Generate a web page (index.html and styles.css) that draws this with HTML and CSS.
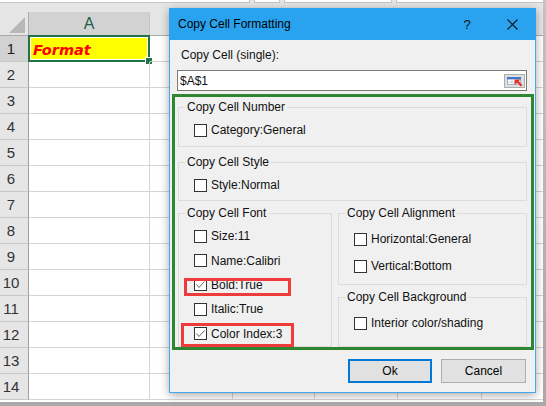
FILE: index.html
```html
<!DOCTYPE html>
<html>
<head>
<meta charset="utf-8">
<link rel="stylesheet" href="styles.css">
</head>
<body>
<div class="screen">
  <div class="sheet">
    <div class="topbar"><span class="tb tb1"></span><span class="tb tb2"></span><span class="tb tb3"></span><span class="tb tb4"></span></div>
    <div class="colhead">
      <div class="corner"><svg width="28" height="23" viewBox="0 0 28 23"><polygon points="25,5 25,21 9,21" fill="#b7b7b7"/></svg></div>
      <div class="ch ca on">A</div><div class="ch cb"></div><div class="ch cc"></div><div class="ch cd"></div><div class="ch ce"></div><div class="ch cf"></div>
    </div>
    <div class="row"><div class="rh on">1</div><div class="c ca yellow"><span class="fmt">Format</span><span class="selbox"><span class="handle"></span></span></div><div class="c cb"></div><div class="c cc"></div><div class="c cd"></div><div class="c ce"></div><div class="c cf"></div></div>
    <div class="row"><div class="rh">2</div><div class="c ca"></div><div class="c cb"></div><div class="c cc"></div><div class="c cd"></div><div class="c ce"></div><div class="c cf"></div></div>
    <div class="row"><div class="rh">3</div><div class="c ca"></div><div class="c cb"></div><div class="c cc"></div><div class="c cd"></div><div class="c ce"></div><div class="c cf"></div></div>
    <div class="row"><div class="rh">4</div><div class="c ca"></div><div class="c cb"></div><div class="c cc"></div><div class="c cd"></div><div class="c ce"></div><div class="c cf"></div></div>
    <div class="row"><div class="rh">5</div><div class="c ca"></div><div class="c cb"></div><div class="c cc"></div><div class="c cd"></div><div class="c ce"></div><div class="c cf"></div></div>
    <div class="row"><div class="rh">6</div><div class="c ca"></div><div class="c cb"></div><div class="c cc"></div><div class="c cd"></div><div class="c ce"></div><div class="c cf"></div></div>
    <div class="row"><div class="rh">7</div><div class="c ca"></div><div class="c cb"></div><div class="c cc"></div><div class="c cd"></div><div class="c ce"></div><div class="c cf"></div></div>
    <div class="row"><div class="rh">8</div><div class="c ca"></div><div class="c cb"></div><div class="c cc"></div><div class="c cd"></div><div class="c ce"></div><div class="c cf"></div></div>
    <div class="row"><div class="rh">9</div><div class="c ca"></div><div class="c cb"></div><div class="c cc"></div><div class="c cd"></div><div class="c ce"></div><div class="c cf"></div></div>
    <div class="row"><div class="rh">10</div><div class="c ca"></div><div class="c cb"></div><div class="c cc"></div><div class="c cd"></div><div class="c ce"></div><div class="c cf"></div></div>
    <div class="row"><div class="rh">11</div><div class="c ca"></div><div class="c cb"></div><div class="c cc"></div><div class="c cd"></div><div class="c ce"></div><div class="c cf"></div></div>
    <div class="row"><div class="rh">12</div><div class="c ca"></div><div class="c cb"></div><div class="c cc"></div><div class="c cd"></div><div class="c ce"></div><div class="c cf"></div></div>
    <div class="row"><div class="rh">13</div><div class="c ca"></div><div class="c cb"></div><div class="c cc"></div><div class="c cd"></div><div class="c ce"></div><div class="c cf"></div></div>
    <div class="row"><div class="rh">14</div><div class="c ca"></div><div class="c cb"></div><div class="c cc"></div><div class="c cd"></div><div class="c ce"></div><div class="c cf"></div></div>
  </div>

  <div class="dialog">
    <div class="titlebar">
      <span class="title">Copy Cell Formatting</span>
      <span class="tbtn help">?</span>
      <span class="tbtn close"><svg width="11" height="11" viewBox="0 0 11 11"><path d="M0.5 0.5L10.5 10.5M10.5 0.5L0.5 10.5" stroke="#111" stroke-width="1.1" fill="none"/></svg></span>
    </div>
    <div class="lbl">Copy Cell (single):</div>
    <div class="range">
      <span class="rtext">$A$1</span>
      <span class="rbtn"><svg width="21" height="14" viewBox="0 0 21 14">
        <rect x="0.5" y="0.5" width="20" height="13" fill="#dedede" stroke="#adadad"/>
        <rect x="3.5" y="3.5" width="13" height="7" fill="#fff" stroke="#9aa9bd" stroke-width="0.8"/>
        <rect x="3" y="3" width="14" height="2.4" fill="#3d77c9"/>
        <path d="M3.5 8H16.5M8 5.4V10.5M12.5 5.4V10.5" stroke="#b6c5dc" stroke-width="0.8"/>
        <polygon points="10.5,5.5 16.5,5.5 14.7,7.3 18.5,11 16.8,12.6 13,8.8 10.5,11" fill="#e2312b"/>
      </svg></span>
    </div>
    <div class="green">
      <fieldset class="grp g-num">
        <legend>Copy Cell Number</legend>
        <div class="items pt4 pb3">
          <div class="opt h245"><span class="box"></span>Category:General</div>
        </div>
      </fieldset>
      <fieldset class="grp g-style">
        <legend>Copy Cell Style</legend>
        <div class="items pt4 pb25">
          <div class="opt h245"><span class="box"></span>Style:Normal</div>
        </div>
      </fieldset>
      <div class="cols">
        <fieldset class="grp g-font">
          <legend>Copy Cell Font</legend>
          <div class="items pt4">
            <div class="opt h244"><span class="box"></span>Size:11</div>
            <div class="opt h244"><span class="box"></span>Name:Calibri</div>
            <div class="opt h244"><span class="box"><svg width="11" height="11" viewBox="0 0 11 11"><polyline points="1.5,5.5 4,8.5 9.5,2.5" fill="none" stroke="#666" stroke-width="1"/></svg></span>Bold:True<span class="mark mark-bold"></span></div>
            <div class="opt h244"><span class="box"></span>Italic:True</div>
            <div class="opt h244"><span class="box"><svg width="11" height="11" viewBox="0 0 11 11"><polyline points="1.5,5.5 4,8.5 9.5,2.5" fill="none" stroke="#666" stroke-width="1"/></svg></span>Color Index:3<span class="mark mark-color"></span></div>
          </div>
        </fieldset>
        <div class="rcol">
          <fieldset class="grp g-align">
            <legend>Copy Cell Alignment</legend>
            <div class="items pt55 pb45">
              <div class="opt h27"><span class="box"></span>Horizontal:General</div>
              <div class="opt h27"><span class="box"></span>Vertical:Bottom</div>
            </div>
          </fieldset>
          <fieldset class="grp g-bg">
            <legend>Copy Cell Background</legend>
            <div class="items pt55">
              <div class="opt h27"><span class="box"></span>Interior color/shading</div>
            </div>
          </fieldset>
        </div>
      </div>
    </div>
    <div class="footer">
      <button class="btn ok">Ok</button>
      <button class="btn cancel">Cancel</button>
    </div>
  </div>
</div>
</body>
</html>
```
FILE: styles.css
```css
html, body {
  margin: 0;
  padding: 0;
}
body {
  width: 546px;
  height: 406px;
  overflow: hidden;
  font-family: "Liberation Sans", Arial, sans-serif;
}
.screen {
  position: relative;
  width: 546px;
  height: 406px;
  background: linear-gradient(#c4c4c4, #a9a9a9);
  overflow: hidden;
}
.sheet {
  width: 543px;
  height: 402px;
  background: #fff;
  overflow: hidden;
}
.topbar {
  height: 12px;
  background: #e6e6e6;
  display: flex;
  gap: 4px;
  align-items: flex-start;
}
.tb {
  height: 2px;
  background: #fff;
  border: 1px solid #c6c6c6;
  border-top: 0;
  flex: none;
}
.tb1 { width: 249px; border-left: 0; }
.tb2 { width: 24px; }
.tb3 { width: 106px; }
.tb4 { width: 150px; }

.colhead {
  display: flex;
  height: 24px;
}
.corner {
  width: 29px;
  flex: none;
  box-sizing: border-box;
  background: #e6e6e6;
  border-right: 1px solid #ababab;
  border-bottom: 1px solid #ababab;
}
.corner svg { display: block; }
.ch {
  flex: none;
  box-sizing: border-box;
  background: #e6e6e6;
  border-right: 1px solid #c6c6c6;
  border-bottom: 1px solid #ababab;
  text-align: center;
  font-size: 16px;
  line-height: 23px;
  color: #444;
}
.ch.on {
  background: #d2d2d2;
  color: #1f5f46;
}
.ca { width: 121px; }
.cb { width: 83px; }
.cc { width: 82px; }
.cd { width: 83px; }
.ce { width: 84px; }
.cf { width: 83px; }

.row {
  display: flex;
  height: 26px;
}
.rh {
  width: 29px;
  flex: none;
  box-sizing: border-box;
  background: #e6e6e6;
  border-right: 1px solid #9e9e9e;
  border-bottom: 1px solid #c8c8c8;
  font-size: 15px;
  color: #333;
  display: flex;
  align-items: center;
  justify-content: center;
  padding-right: 6px;
}
.rh.on {
  background: #d2d2d2;
  color: #1d1d1d;
}
.c {
  flex: none;
  box-sizing: border-box;
  border-right: 1px solid #d4d4d4;
  border-bottom: 1px solid #d4d4d4;
  position: relative;
}
.yellow {
  background: #ffff00;
  display: flex;
  align-items: center;
  padding-left: 4px;
}
.fmt {
  font-family: "DejaVu Sans", sans-serif;
  font-weight: bold;
  font-style: italic;
  font-size: 14.5px;
  color: #ff0000;
  position: relative;
  top: 1px;
}
.selbox {
  position: absolute;
  top: -1px;
  left: -1px;
  right: -1px;
  bottom: -1px;
  border: 2px solid #217346;
  box-shadow: inset 0 0 0 1px #fff;
}
.handle {
  position: absolute;
  right: -5px;
  bottom: -5px;
  width: 6px;
  height: 6px;
  background: #217346;
  border: 1px solid #fff;
}

/* dialog */
.dialog {
  position: absolute;
  left: 169px;
  top: 8px;
  width: 367px;
  height: 385px;
  box-sizing: border-box;
  border: 1px solid #49a7e8;
  border-top: 0;
  background: #f0f0f0;
  box-shadow: 0 2px 9px rgba(0, 0, 0, 0.35);
  display: flex;
  flex-direction: column;
  font-size: 12px;
  color: #111;
}
.titlebar {
  height: 32px;
  margin: 0 -1px;
  padding-left: 9px;
  background: #29a3ef;
  display: flex;
  align-items: center;
  flex: none;
}
.title {
  flex: 1;
  font-size: 12px;
  color: #000;
}
.tbtn {
  height: 32px;
  display: flex;
  align-items: center;
  justify-content: center;
}
.help {
  width: 44px;
  font-size: 13px;
  color: #111;
}
.close {
  width: 46px;
  margin-right: 1px;
}
.close svg { display: block; }
.lbl {
  margin: 7px 0 0 11px;
  height: 16px;
  line-height: 16px;
}
.range {
  margin: 7px 8px 0 7px;
  height: 21px;
  box-sizing: border-box;
  border: 1px solid #7a7a7a;
  background: #fff;
  display: flex;
  align-items: center;
  flex: none;
}
.rtext {
  padding-left: 2px;
}
.rbtn {
  margin-left: auto;
  margin-right: 1px;
  height: 14px;
}
.rbtn svg { display: block; }

.green {
  margin: 3px 1px 0 2px;
  height: 256px;
  box-sizing: border-box;
  border: 3px solid #2e8633;
  padding: 3px 4px 0 3px;
  flex: none;
}
.grp {
  margin: 0;
  min-width: 0;
  border: 1px solid #dcdcdc;
  padding: 0 0 0 6px;
}
.grp legend {
  padding: 0 2px;
  line-height: 14px;
  font-size: 12px;
  color: #111;
}
.g-style { margin-top: 8.5px; }
.cols {
  display: flex;
  gap: 6px;
  margin-top: 5px;
}
.g-font {
  width: 154px;
  box-sizing: border-box;
  flex: none;
}
.rcol {
  flex: 1;
  display: flex;
  flex-direction: column;
}
.g-bg {
  margin-top: 5px;
  flex: 1;
}
.items { display: block; }
.pt4 { padding-top: 4px; }
.pt55 { padding-top: 5.5px; }
.pb3 { padding-bottom: 3px; }
.pb25 { padding-bottom: 2.5px; }
.pb45 { padding-bottom: 4.5px; }
.opt {
  position: relative;
  display: flex;
  align-items: center;
  margin-left: 9px;
  white-space: nowrap;
}
.h245 { height: 24.5px; }
.h244 { height: 24.4px; }
.h27 { height: 27px; }
.box {
  width: 13px;
  height: 13px;
  box-sizing: border-box;
  border: 1px solid #333;
  background: #fff;
  margin-right: 4px;
  flex: none;
}
.box svg { display: block; }
.mark {
  position: absolute;
  box-sizing: border-box;
  border: 3px solid #ef3b3b;
  z-index: 2;
}
.mark-bold {
  left: -10px;
  top: 5.5px;
  width: 107px;
  height: 18px;
}
.mark-color {
  left: -13px;
  top: 1.7px;
  width: 113px;
  height: 24px;
}

.footer {
  display: flex;
  justify-content: flex-end;
  gap: 9px;
  margin: 9px 9px 0 0;
}
.btn {
  height: 24px;
  box-sizing: border-box;
  background: #e1e1e1;
  border: 1px solid #adadad;
  font-family: "Liberation Sans", Arial, sans-serif;
  font-size: 12px;
  color: #000;
  padding: 0;
}
.ok {
  width: 84px;
  border: 2px solid #0078d7;
}
.cancel {
  width: 85px;
}
```
